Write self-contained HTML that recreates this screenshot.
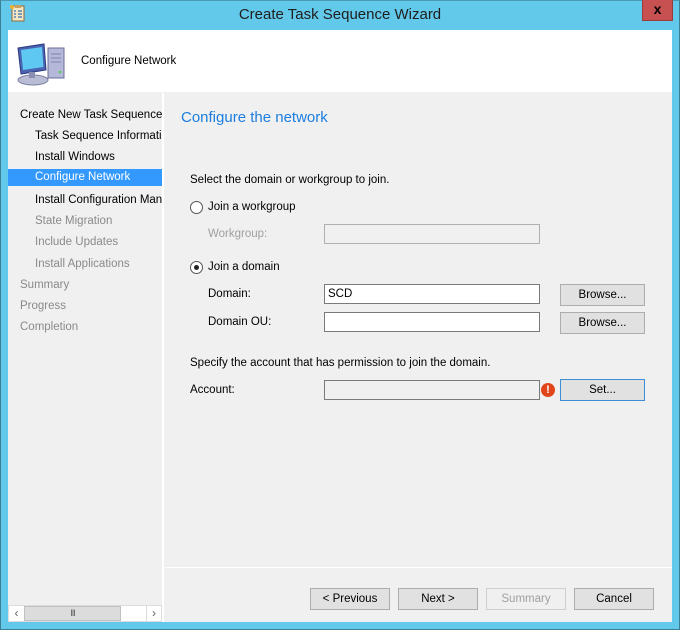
<!DOCTYPE html>
<html><head><style>
*{margin:0;padding:0;box-sizing:border-box}
body{width:680px;height:630px;background:#63c9ea;position:relative;overflow:hidden;font-family:"Liberation Sans",sans-serif;font-size:11.5px;color:#000}
.a{position:absolute}
.frame{left:0;top:0;width:680px;height:630px;border:1px solid #3a7f96;border-top-color:#4a9ab5}
.close{left:642px;top:0;width:31px;height:21px;background:#c75050;border:1px solid #9e3a3a;border-top:none;color:#000;font-weight:bold;font-size:14px;text-align:center;line-height:19px}
.title{left:0;width:680px;top:6px;text-align:center;font-size:15px;color:#1e1e1e}
.client{left:8px;top:30px;width:664px;height:592px;background:#f0f0f0}
.hdr{left:8px;top:30px;width:664px;height:62px;background:#fff}
.nav{left:8px;top:95px;width:154px;height:511px;background:#f0f0f0;overflow:hidden;white-space:nowrap}
.nav div{position:absolute;height:20px;line-height:20px;width:154px}
.sep{left:162px;top:93px;width:2px;height:529px;background:#fff}
.hl{left:165px;top:567px;width:507px;height:1px;background:#fff}
.tb{background:#fff;border:1px solid #7a7a7a;height:20px;padding-left:3px;line-height:18px}
.tbd{background:#f0f0f0;border:1px solid #b0b0b0;height:20px}
.btn{background:#e1e1e1;border:1px solid #adadad;text-align:center;height:22px;line-height:20px}
.radio{width:13px;height:13px;border-radius:50%;border:1px solid #555;background:#fff}
.gray{color:#a0a0a0}
.nav .gray{color:#8a8a8a}
</style></head><body>
<div class="a frame"></div>
<svg class="a" style="left:9px;top:4px" width="18" height="18" viewBox="0 0 18 18"><rect x="3" y="2" width="12" height="15" fill="#f4e7c4" stroke="#8a6a3a"/><rect x="6" y="1" width="6" height="3" fill="#c9a060"/><path d="M5 7h2M9 7h4M5 10h2M9 10h4M5 13h2M9 13h4" stroke="#3a6fb0" stroke-width="1.2"/><circle cx="3" cy="3" r="2" fill="#f0b030"/></svg>
<div class="a title">Create Task Sequence Wizard</div>
<div class="a close">x</div>
<div class="a client"></div>
<div class="a hdr"></div>
<svg class="a" style="left:16px;top:40px" width="50" height="46" viewBox="0 0 50 46"><ellipse cx="17" cy="40" rx="15" ry="5" fill="#b8bcd4" stroke="#7c80a0"/><rect x="32" y="8" width="16" height="30" fill="#b5b8d8" stroke="#6a6e98"/><path d="M35 14h10M35 18h10M35 22h10" stroke="#7e82b0"/><circle cx="44" cy="32" r="1.3" fill="#5c5"/><path d="M2 8 L28 4 L30 30 L5 34 Z" fill="#4a62b0" stroke="#2a3a80"/><path d="M5 10 L26 7 L27.5 27 L7 30 Z" fill="#5fc8f2"/><rect x="13" y="32" width="6" height="6" fill="#8a8eb0"/></svg>
<div class="a" style="left:81px;top:55px">Configure Network</div>
<div class="a nav">
<div style="top:10px;left:12px">Create New Task Sequence</div>
<div style="top:31px;left:27px">Task Sequence Information</div>
<div style="top:52px;left:27px">Install Windows</div>
<div style="left:0;padding-left:27px;background:#3399ff;color:#fff;height:17px;line-height:17px;top:74px">Configure Network</div>
<div style="top:95px;left:27px">Install Configuration Manager</div>
<div style="top:116px;left:27px" class="gray">State Migration</div>
<div style="top:137px;left:27px" class="gray">Include Updates</div>
<div style="top:159px;left:27px" class="gray">Install Applications</div>
<div style="top:180px;left:12px" class="gray">Summary</div>
<div style="top:201px;left:12px" class="gray">Progress</div>
<div style="top:222px;left:12px" class="gray">Completion</div>
</div>
<div class="a" style="left:8px;top:605px;width:154px;height:17px;background:#fff;border:1px solid #dcdcdc"></div>
<div class="a" style="left:9px;top:606px;width:15px;height:15px;text-align:center;line-height:14px;color:#606060;font-size:12px">&lsaquo;</div>
<div class="a" style="left:24px;top:606px;width:97px;height:15px;background:#dcdcdc;border:1px solid #c0c0c0;text-align:center;font-size:9px;line-height:13px;color:#606060;letter-spacing:-1px">III</div>
<div class="a" style="left:146px;top:606px;width:15px;height:15px;text-align:center;line-height:14px;color:#606060;font-size:12px;border-left:1px solid #dcdcdc">&rsaquo;</div>
<div class="a sep"></div>
<div class="a hl"></div>
<div class="a" style="left:181px;top:109px;font-size:15px;color:#1b7ee0">Configure the network</div>
<div class="a" style="left:190px;top:174px">Select the domain or workgroup to join.</div>
<div class="a radio" style="left:190px;top:201px"></div>
<div class="a" style="left:208px;top:201px">Join a workgroup</div>
<div class="a gray" style="left:208px;top:228px">Workgroup:</div>
<div class="a tbd" style="left:324px;top:224px;width:216px"></div>
<div class="a radio" style="left:190px;top:261px"><div class="a" style="left:3px;top:3px;width:5px;height:5px;border-radius:50%;background:#222"></div></div>
<div class="a" style="left:208px;top:261px">Join a domain</div>
<div class="a" style="left:208px;top:288px">Domain:</div>
<div class="a tb" style="left:324px;top:284px;width:216px">SCD</div>
<div class="a btn" style="left:560px;top:284px;width:85px">Browse...</div>
<div class="a" style="left:208px;top:316px">Domain OU:</div>
<div class="a tb" style="left:324px;top:312px;width:216px"></div>
<div class="a btn" style="left:560px;top:312px;width:85px">Browse...</div>
<div class="a" style="left:190px;top:357px">Specify the account that has permission to join the domain.</div>
<div class="a" style="left:190px;top:384px">Account:</div>
<div class="a tbd" style="left:324px;top:380px;width:216px;border-color:#7a7a7a"></div>
<div class="a" style="left:541px;top:383px;width:14px;height:14px;border-radius:50%;background:#e0451c;color:#fff;font-weight:bold;font-size:11px;text-align:center;line-height:14px">!</div>
<div class="a btn" style="left:560px;top:379px;width:85px;border-color:#3c8dd6">Set...</div>
<div class="a btn" style="left:310px;top:588px;width:80px">&lt; Previous</div>
<div class="a btn" style="left:398px;top:588px;width:80px">Next &gt;</div>
<div class="a btn" style="left:486px;top:588px;width:80px;background:#f0f0f0;border-color:#cfcfcf;color:#a0a0a0">Summary</div>
<div class="a btn" style="left:574px;top:588px;width:80px">Cancel</div>
</body></html>
